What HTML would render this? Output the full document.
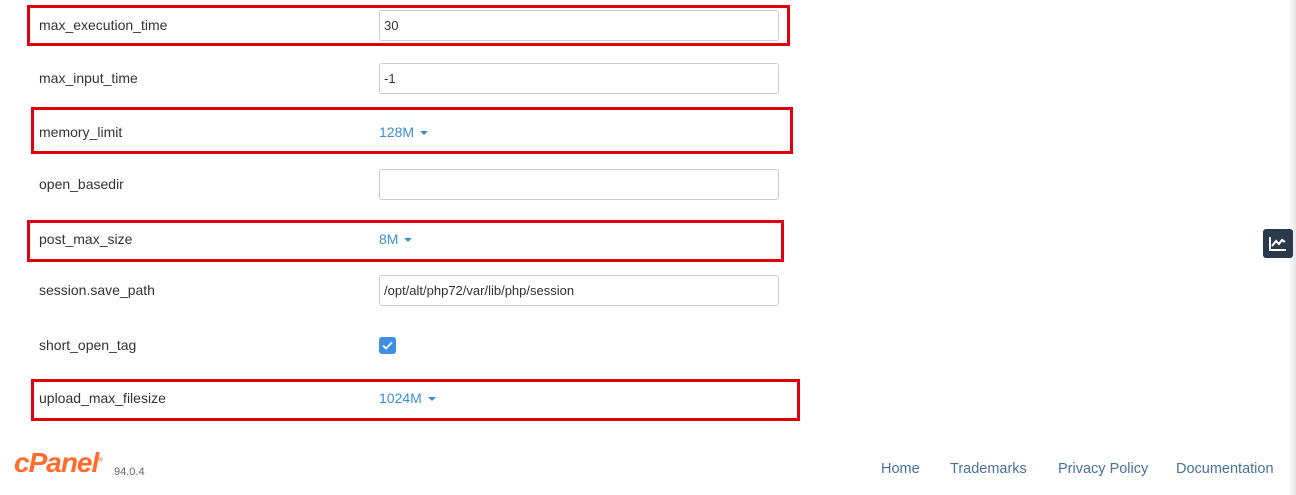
<!DOCTYPE html>
<html><head><style>
body{margin:0;width:1296px;height:495px;background:#fff;font-family:"Liberation Sans",sans-serif;font-size:14px;color:#333;position:relative;overflow:hidden}
.a{position:absolute}
.lbl{left:39px}
.in{left:379px;width:400px;height:31px;border:1px solid #ccc;border-radius:3px;box-sizing:border-box;padding:0 4px;line-height:29px;font-size:13px;color:#333}
.red{border:3px solid #e00010;box-sizing:border-box}
.sel{left:379px;color:#3a8fd8}
.sel:after{content:"";display:inline-block;margin-left:6px;vertical-align:middle;border-left:4px solid transparent;border-right:4px solid transparent;border-top:4px solid #3a8fd8}
.ft{color:#49709c;top:461px;font-size:14.5px}
</style></head><body>
<div class="a" style="right:0;top:0;width:8px;height:495px;background:linear-gradient(90deg,#fff,#e6e6e6)"></div>
<div class="a red" style="left:27px;top:5px;width:763px;height:41px"></div>
<div class="a red" style="left:31px;top:107px;width:762px;height:47px"></div>
<div class="a red" style="left:27px;top:220px;width:757px;height:42px"></div>
<div class="a red" style="left:31px;top:379px;width:769px;height:42px"></div>

<div class="a lbl" style="top:17px">max_execution_time</div>
<div class="a in" style="top:10px">30</div>
<div class="a lbl" style="top:70px">max_input_time</div>
<div class="a in" style="top:63px">-1</div>
<div class="a lbl" style="top:124px">memory_limit</div>
<div class="a sel" style="top:124px">128M</div>
<div class="a lbl" style="top:176px">open_basedir</div>
<div class="a in" style="top:169px"></div>
<div class="a lbl" style="top:231px">post_max_size</div>
<div class="a sel" style="top:231px">8M</div>
<div class="a lbl" style="top:282px">session.save_path</div>
<div class="a in" style="top:275px">/opt/alt/php72/var/lib/php/session</div>
<div class="a lbl" style="top:337px">short_open_tag</div>
<div class="a" style="left:379px;top:337px;width:17px;height:17px;background:#3d8fe6;border-radius:3px">
<svg width="17" height="17" viewBox="0 0 17 17"><path d="M4 8.5l3 3 6-6" stroke="#fff" stroke-width="1.8" fill="none"/></svg></div>
<div class="a lbl" style="top:390px">upload_max_filesize</div>
<div class="a sel" style="top:390px">1024M</div>

<div class="a" style="left:1263px;top:229px;width:30px;height:29px;background:#2b3a4a;border-radius:3px">
<svg width="30" height="29" viewBox="0 0 30 29"><path d="M7 8v13h16" stroke="#fff" stroke-width="2" fill="none"/><path d="M9 17l4-5 3 3 3-4 3 2" stroke="#fff" stroke-width="2" fill="none"/></svg></div>

<div class="a" style="left:14px;top:447px;font-size:28px;font-weight:bold;font-style:italic;color:#ff6c2c;letter-spacing:-1px">cPanel<sup style="font-size:6px">®</sup></div>
<div class="a" style="left:114px;top:466px;font-size:11px;color:#666">94.0.4</div>
<div class="a ft" style="left:881px">Home</div>
<div class="a ft" style="left:950px">Trademarks</div>
<div class="a ft" style="left:1058px">Privacy Policy</div>
<div class="a ft" style="left:1176px">Documentation</div>
</body></html>
